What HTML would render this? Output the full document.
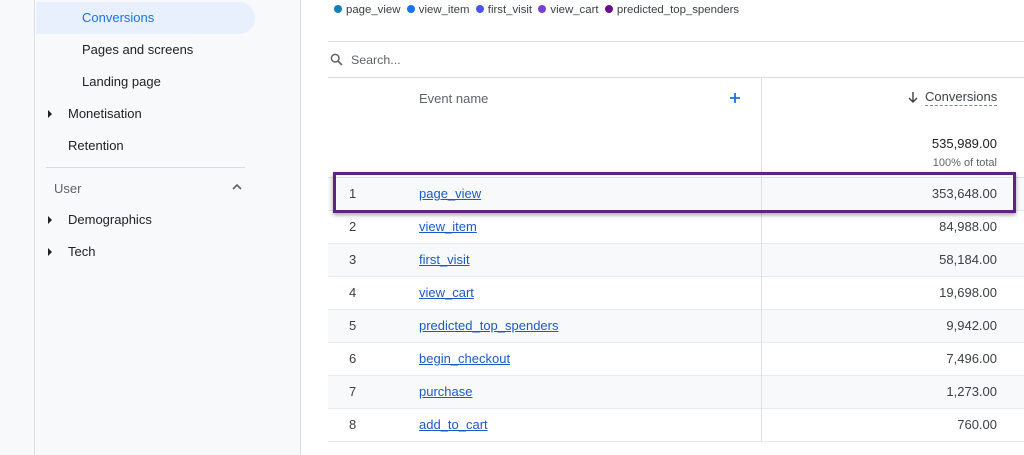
<!DOCTYPE html>
<html><head><meta charset="utf-8"><style>
*{margin:0;padding:0;box-sizing:border-box}
body{width:1024px;height:455px;overflow:hidden;background:#fff;font-family:"Liberation Sans",Arial,sans-serif;position:relative;color:#3c4043}
.abs{position:absolute}
.leftbg{left:0;top:0;width:35px;height:455px;background:#f8f9fa;border-right:1px solid #dadce0}
.side{left:36px;top:0;width:265px;height:455px;background:#f8f9fa;border-right:1px solid #dadce0}
.nav{position:absolute;font-size:13px;color:#202124;white-space:nowrap}
.sel{left:36px;top:2px;width:219px;height:32px;background:#e8f0fe;border-radius:0 16px 16px 0}
.tri{position:absolute;width:0;height:0;border-top:4px solid transparent;border-bottom:4px solid transparent;border-left:4px solid #202124}
.leg{font-size:11.4px;color:#3c4043;top:4px;white-space:nowrap}
.dot{display:inline-block;width:8px;height:8px;border-radius:50%;margin-right:4px;vertical-align:-0px}
.row{position:absolute;left:328px;width:696px;height:33px;border-bottom:1px solid #e8eaed}
.row.g{background:#f8f9fa}
.row .n{position:absolute;left:21px;top:8px;font-size:13px;color:#3c4043}
.row .l{position:absolute;left:91px;top:8px;font-size:13px;color:#1a5ac8;text-decoration:underline}
.row .v{position:absolute;right:27px;top:8px;font-size:13px;color:#3c4043}
</style></head><body>
<div class="abs leftbg"></div>
<div class="abs side"></div>
<div class="abs sel"></div>
<div class="nav" style="left:82px;top:10px;color:#1a73e8">Conversions</div>
<div class="nav" style="left:82px;top:42px">Pages and screens</div>
<div class="nav" style="left:82px;top:74px">Landing page</div>
<div class="tri" style="left:48px;top:110px"></div>
<div class="nav" style="left:68px;top:106px">Monetisation</div>
<div class="nav" style="left:68px;top:138px">Retention</div>
<div class="abs" style="left:46px;top:167px;width:199px;height:1px;background:#dadce0"></div>
<div class="nav" style="left:54px;top:181px;color:#5f6368">User</div>
<svg class="abs" style="left:231px;top:183px" width="12" height="8" viewBox="0 0 12 8"><path d="M2 6 L6 2 L10 6" fill="none" stroke="#5f6368" stroke-width="1.6"/></svg>
<div class="tri" style="left:48px;top:216px"></div>
<div class="nav" style="left:68px;top:212px">Demographics</div>
<div class="tri" style="left:48px;top:248px"></div>
<div class="nav" style="left:68px;top:244px">Tech</div>

<div class="abs leg" style="left:334px"><span class="dot" style="background:#137db5"></span>page_view&nbsp; <span class="dot" style="background:#1a73e8"></span>view_item&nbsp; <span class="dot" style="background:#4a55e8"></span>first_visit&nbsp; <span class="dot" style="background:#7b3fd6"></span>view_cart&nbsp; <span class="dot" style="background:#6a0f8e"></span>predicted_top_spenders</div>
<div class="abs" style="left:328px;top:41px;width:696px;height:1px;background:#dadce0"></div>
<svg class="abs" style="left:330px;top:53px" width="13" height="13" viewBox="0 0 13 13"><circle cx="5.2" cy="5.2" r="3.8" fill="none" stroke="#5f6368" stroke-width="1.5"/><path d="M8 8 L12 12" stroke="#5f6368" stroke-width="1.6"/></svg>
<div class="abs" style="left:351px;top:53px;font-size:12.4px;color:#5f6368">Search...</div>
<div class="abs" style="left:328px;top:77px;width:696px;height:1px;background:#dadce0"></div>
<div class="abs" style="left:761px;top:77px;width:1px;height:365px;background:#e0e0e0"></div>
<div class="abs" style="left:419px;top:91px;font-size:13px;color:#5f6368">Event name</div>
<svg class="abs" style="left:729px;top:92px" width="12" height="12" viewBox="0 0 12 12"><path d="M6 1V11M1 6H11" stroke="#1a73e8" stroke-width="1.8"/></svg>
<svg class="abs" style="left:907px;top:91px" width="12" height="13" viewBox="0 0 12 13"><path d="M6 1V11M2 7L6 11L10 7" fill="none" stroke="#3c4043" stroke-width="1.4"/></svg>
<div class="abs" style="left:925px;top:89px;font-size:13px;color:#3c4043;border-bottom:1px dashed #80868b;padding-bottom:1px">Conversions</div>
<div class="abs" style="right:27px;top:136px;font-size:13px;color:#202124">535,989.00</div>
<div class="abs" style="right:27px;top:157px;font-size:11px;color:#5f6368">100% of total</div>
<div class="abs" style="left:328px;top:177px;width:696px;height:1px;background:#e0e0e0"></div>

<div class="row g" style="top:178px"><span class="n">1</span><span class="l">page_view</span><span class="v">353,648.00</span></div>
<div class="row" style="top:211px"><span class="n">2</span><span class="l">view_item</span><span class="v">84,988.00</span></div>
<div class="row g" style="top:244px"><span class="n">3</span><span class="l">first_visit</span><span class="v">58,184.00</span></div>
<div class="row" style="top:277px"><span class="n">4</span><span class="l">view_cart</span><span class="v">19,698.00</span></div>
<div class="row g" style="top:310px"><span class="n">5</span><span class="l">predicted_top_spenders</span><span class="v">9,942.00</span></div>
<div class="row" style="top:343px"><span class="n">6</span><span class="l">begin_checkout</span><span class="v">7,496.00</span></div>
<div class="row g" style="top:376px"><span class="n">7</span><span class="l">purchase</span><span class="v">1,273.00</span></div>
<div class="row" style="top:409px"><span class="n">8</span><span class="l">add_to_cart</span><span class="v">760.00</span></div>
<div class="abs" style="left:761px;top:178px;width:1px;height:264px;background:#e0e0e0"></div>

<div class="abs" style="left:333px;top:172px;width:683px;height:41px;border:3px solid #5c2483;box-shadow:0 2px 4px rgba(0,0,0,.35)"></div>
</body></html>
